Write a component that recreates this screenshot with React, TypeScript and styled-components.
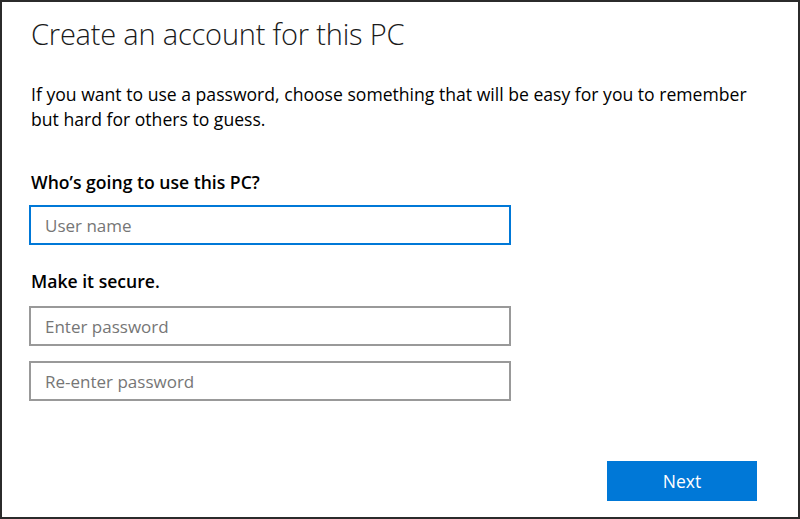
import styled, { createGlobalStyle } from "styled-components";

const GlobalStyle = createGlobalStyle`
  html, body {
    margin: 0;
    padding: 0;
    background: #ffffff;
  }
  body {
    font-family: "Open Sans", "Noto Sans", "Liberation Sans", sans-serif;
    color: #000000;
  }
  * {
    box-sizing: border-box;
  }
`;

const Frame = styled.div`
  width: 800px;
  height: 519px;
  border: 2px solid #2b2b2b;
  background: #ffffff;
  padding: 12px 40px 16px 27px;
  display: flex;
  flex-direction: column;
`;

const Title = styled.h1`
  margin: 0 0 0 2px;
  font-weight: 300;
  font-size: 29px;
  line-height: 40px;
  color: #1a1a1a;
  letter-spacing: -0.2px;
`;

const Intro = styled.p`
  margin: 28px 0 0 2px;
  font-size: 17.6px;
  line-height: 25px;
  font-weight: 400;
  color: #000000;
  white-space: nowrap;
`;

const Label = styled.h2<{ $top: number }>`
  margin: ${({ $top }) => $top}px 0 0 2px;
  font-size: 17.6px;
  line-height: 22px;
  font-weight: 600;
  color: #000000;
`;

const Field = styled.input<{ $focused?: boolean; $gap: number }>`
  width: 482px;
  height: 40px;
  margin-top: ${({ $gap }) => $gap}px;
  padding: 0 14px;
  border: 2px solid ${({ $focused }) => ($focused ? "#0078d7" : "#999999")};
  outline: none;
  font-family: inherit;
  font-size: 17px;
  color: #000000;
  background: #ffffff;

  &::placeholder {
    color: #767676;
  }
`;

const Footer = styled.div`
  margin-top: auto;
  display: flex;
  justify-content: flex-end;
`;

const NextButton = styled.button`
  width: 150px;
  height: 40px;
  margin-right: 1px;
  border: none;
  background: #0078d7;
  color: #ffffff;
  font-family: inherit;
  font-size: 17.5px;
  cursor: pointer;
`;

export default function App() {
  return (
    <>
      <GlobalStyle />
      <Frame>
        <Title>Create an account for this PC</Title>
        <Intro>
          If you want to use a password, choose something that will be easy for you to remember
          <br />
          but hard for others to guess.
        </Intro>
        <Label $top={39}>Who’s going to use this PC?</Label>
        <Field $focused $gap={12} placeholder="User name" />
        <Label $top={25}>Make it secure.</Label>
        <Field $gap={14} type="password" placeholder="Enter password" />
        <Field $gap={15} type="password" placeholder="Re-enter password" />
        <Footer>
          <NextButton>Next</NextButton>
        </Footer>
      </Frame>
    </>
  );
}
